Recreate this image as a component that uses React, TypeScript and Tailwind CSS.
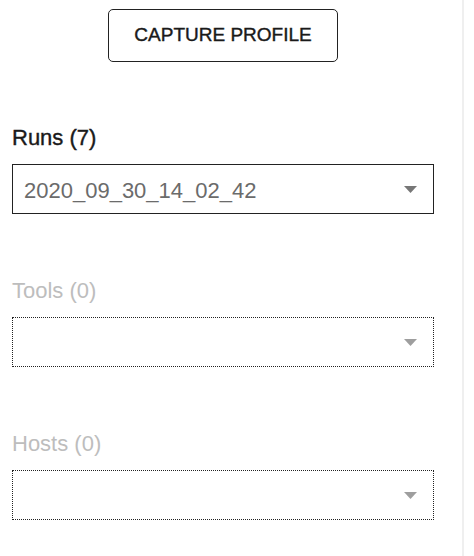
import React from 'react';

interface SelectFieldProps {
  label: string;
  value?: string;
  disabled?: boolean;
}

const Caret: React.FC<{ color: string }> = ({ color }) => (
  <svg width="13" height="7" viewBox="0 0 13 7" className="shrink-0">
    <path d="M0 0 L13 0 L6.5 7 Z" fill={color} />
  </svg>
);

const SelectField: React.FC<SelectFieldProps> = ({ label, value, disabled }) => (
  <div className="flex flex-col gap-[13px]">
    <div
      className={`h-[26px] text-[22px] leading-[26px] ${
        disabled ? 'text-[#bdbdbd]' : 'text-[#1a1a1a] [-webkit-text-stroke:0.4px_#1a1a1a]'
      }`}
    >
      {label}
    </div>
    <div
      className={`h-[50px] flex items-center justify-between pl-[11px] pr-[16px] ${
        disabled ? 'border border-dotted border-[#222222]' : 'border border-[#222222]'
      }`}
    >
      <span className="text-[22px] leading-[26px] pt-[3px] text-[#6b6b6b]">{value}</span>
      <Caret color={disabled ? '#9e9e9e' : '#777777'} />
    </div>
  </div>
);

export default function App() {
  return (
    <div
      className="w-[464px] h-[556px] bg-white border-r-2 border-[#efefef] pl-[12px] pr-[28px] pt-[9px]"
      style={{ fontFamily: '"Liberation Sans", Arial, sans-serif' }}
    >
      <div className="flex flex-col gap-[63px]">
        <div className="flex justify-center">
          <button className="w-[230px] h-[53px] border border-[#222222] rounded-[5px] bg-white text-[19px] text-[#1a1a1a] [-webkit-text-stroke:0.4px_#1a1a1a]">
            CAPTURE PROFILE
          </button>
        </div>
        <div className="flex flex-col gap-[64px]">
          <SelectField label="Runs (7)" value="2020_09_30_14_02_42" />
          <SelectField label="Tools (0)" disabled />
          <SelectField label="Hosts (0)" disabled />
        </div>
      </div>
    </div>
  );
}
